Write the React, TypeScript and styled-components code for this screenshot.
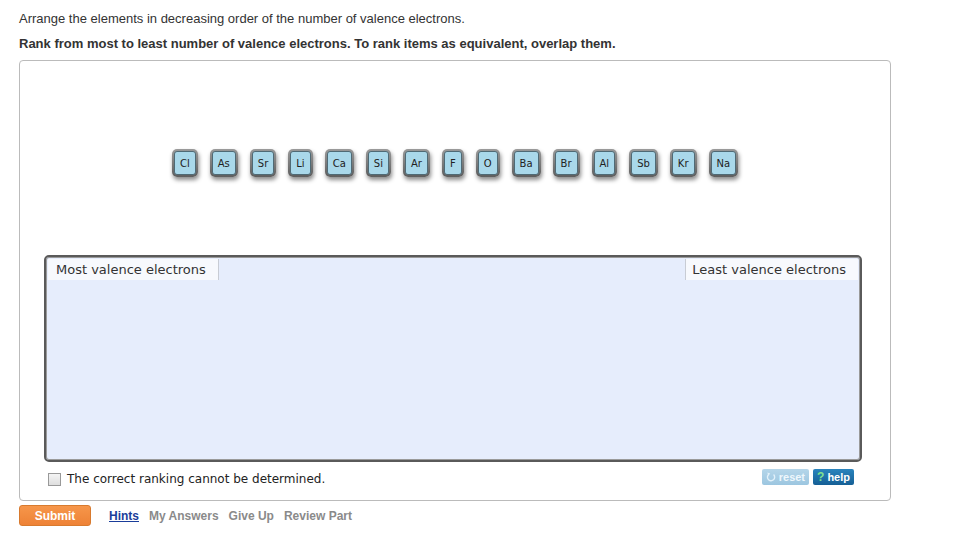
import React from 'react';
import styled, { createGlobalStyle } from 'styled-components';

const elements = ['Cl', 'As', 'Sr', 'Li', 'Ca', 'Si', 'Ar', 'F', 'O', 'Ba', 'Br', 'Al', 'Sb', 'Kr', 'Na'];

const GlobalStyle = createGlobalStyle`
	body {
		margin: 0;
		background: #fff;
		font-family: 'Liberation Sans', Arial, sans-serif;
		color: #333;
	}
`;

const App = (): JSX.Element => {
	return (
		<>
			<GlobalStyle />
			<StyledPage>
				<StyledIntro>Arrange the elements in decreasing order of the number of valence electrons.</StyledIntro>
				<StyledInstruction>
					Rank from most to least number of valence electrons. To rank items as equivalent, overlap them.
				</StyledInstruction>

				<StyledPanel>
					<StyledTiles>
						{elements.map(symbol => (
							<StyledTile key={symbol}>
								<StyledTileFace>{symbol}</StyledTileFace>
							</StyledTile>
						))}
					</StyledTiles>

					<StyledRanking>
						<StyledRankHeader>
							<StyledRankLabel side="left">Most valence electrons</StyledRankLabel>
							<StyledRankLabel side="right">Least valence electrons</StyledRankLabel>
						</StyledRankHeader>
					</StyledRanking>

					<StyledFooter>
						<StyledCheckLabel>
							<StyledCheckbox />
							The correct ranking cannot be determined.
						</StyledCheckLabel>
						<StyledTools>
							<StyledToolButton variant="reset">
								<svg width="10" height="10" viewBox="0 0 10 10">
									<path
										d="M3 2.2 A3.6 3.6 0 1 0 7.6 2.6"
										fill="none"
										stroke="#e2f1fa"
										strokeWidth="1.4"
									/>
									<path d="M1.4 0.6 L4.2 1.6 L2.2 3.8 Z" fill="#e2f1fa" />
								</svg>
								reset
							</StyledToolButton>
							<StyledToolButton variant="help">
								<StyledQuestion>?</StyledQuestion>
								help
							</StyledToolButton>
						</StyledTools>
					</StyledFooter>
				</StyledPanel>

				<StyledActions>
					<StyledSubmit>Submit</StyledSubmit>
					<StyledLink active>Hints</StyledLink>
					<StyledLink>My Answers</StyledLink>
					<StyledLink>Give Up</StyledLink>
					<StyledLink>Review Part</StyledLink>
				</StyledActions>
			</StyledPage>
		</>
	);
};

export default App;

const StyledPage = styled.div`
	padding: 11px 19px 0;
	width: 872px;
`;

const StyledIntro = styled.p`
	margin: 0;
	font-size: 13px;
	line-height: 15px;
	color: #333;
`;

const StyledInstruction = styled.p`
	margin: 10px 0 0;
	font-size: 13px;
	line-height: 15px;
	font-weight: bold;
	color: #333;
`;

const StyledPanel = styled.div`
	margin-top: 9px;
	height: 441px;
	box-sizing: border-box;
	border: 1px solid #bbb;
	border-radius: 4px;
	display: flex;
	flex-direction: column;
	align-items: flex-start;
	padding: 0 0 0 24px;
`;

const StyledTiles = styled.div`
	display: flex;
	gap: 12px;
	margin: 88px 0 0 128px;
`;

const StyledTile = styled.div`
	height: 28px;
	box-sizing: border-box;
	padding: 2px;
	border-radius: 5px;
	background: linear-gradient(#9a9a9a, #5e5e5e);
	box-shadow: 1px 3px 4px rgba(0, 0, 0, 0.45);
`;

const StyledTileFace = styled.div`
	height: 100%;
	box-sizing: border-box;
	padding: 0 5px;
	min-width: 17px;
	display: flex;
	align-items: center;
	justify-content: center;
	border: 1px solid #4f6a75;
	border-radius: 3px;
	background: #a9d8ea;
	font-family: 'DejaVu Sans', Verdana, sans-serif;
	font-size: 10px;
	color: #222;
`;

const StyledRanking = styled.div`
	margin-top: 78px;
	width: 818px;
	height: 207px;
	box-sizing: border-box;
	border: 2px solid #5a5a5a;
	border-radius: 5px;
	background: #e6edfc;
	padding: 2px;
	box-shadow: inset 0 0 0 1px #9a9a9a;
`;

const StyledRankHeader = styled.div`
	display: flex;
	justify-content: space-between;
`;

const StyledRankLabel = styled.div<{ side: 'left' | 'right' }>`
	height: 21px;
	display: flex;
	align-items: center;
	padding-left: ${({ side }) => (side === 'left' ? '8px' : '6px')};
	padding-right: 12px;
	background: #f7f9fd;
	${({ side }) => (side === 'left' ? 'border-right' : 'border-left')}: 1px solid #c8ccd4;
	font-family: 'DejaVu Sans', Verdana, sans-serif;
	font-size: 13px;
	color: #333;
`;

const StyledFooter = styled.div`
	width: 818px;
	box-sizing: border-box;
	display: flex;
	justify-content: space-between;
	align-items: center;
	padding: 6px 8px 0 4px;
`;

const StyledCheckLabel = styled.label`
	display: flex;
	align-items: center;
	gap: 6px;
	margin-top: 4px;
	font-family: 'DejaVu Sans', Verdana, sans-serif;
	font-size: 12px;
	color: #222;
`;

const StyledCheckbox = styled.span`
	width: 11px;
	height: 11px;
	border: 1px solid #999;
	background: linear-gradient(#f4f4f4, #dedede);
`;

const StyledTools = styled.div`
	display: flex;
	gap: 4px;
`;

const StyledToolButton = styled.span<{ variant: 'reset' | 'help' }>`
	height: 16px;
	display: flex;
	align-items: center;
	gap: 3px;
	padding: 0 4px;
	border-radius: 2px;
	background: ${({ variant }) =>
		variant === 'reset' ? 'linear-gradient(#b5d6ea, #9cc6e0)' : 'linear-gradient(#2a84bd, #155f95)'};
	color: ${({ variant }) => (variant === 'reset' ? '#eef7fc' : '#fff')};
	font-size: 11px;
	font-weight: bold;
`;

const StyledQuestion = styled.span`
	color: #7fe08f;
	font-size: 12px;
`;

const StyledActions = styled.div`
	display: flex;
	align-items: center;
	gap: 10px;
	margin-top: 4px;
`;

const StyledSubmit = styled.span`
	width: 72px;
	height: 21px;
	box-sizing: border-box;
	display: flex;
	align-items: center;
	justify-content: center;
	border: 1px solid #d87a2e;
	border-radius: 3px;
	background: linear-gradient(#f6964a, #ee8236);
	color: #fff;
	font-size: 12px;
	font-weight: bold;
	margin-right: 8px;
`;

const StyledLink = styled.span<{ active?: boolean }>`
	font-size: 12px;
	font-weight: bold;
	color: ${({ active }) => (active ? '#1a3d9a' : '#8a8a8a')};
	text-decoration: ${({ active }) => (active ? 'underline' : 'none')};
`;
